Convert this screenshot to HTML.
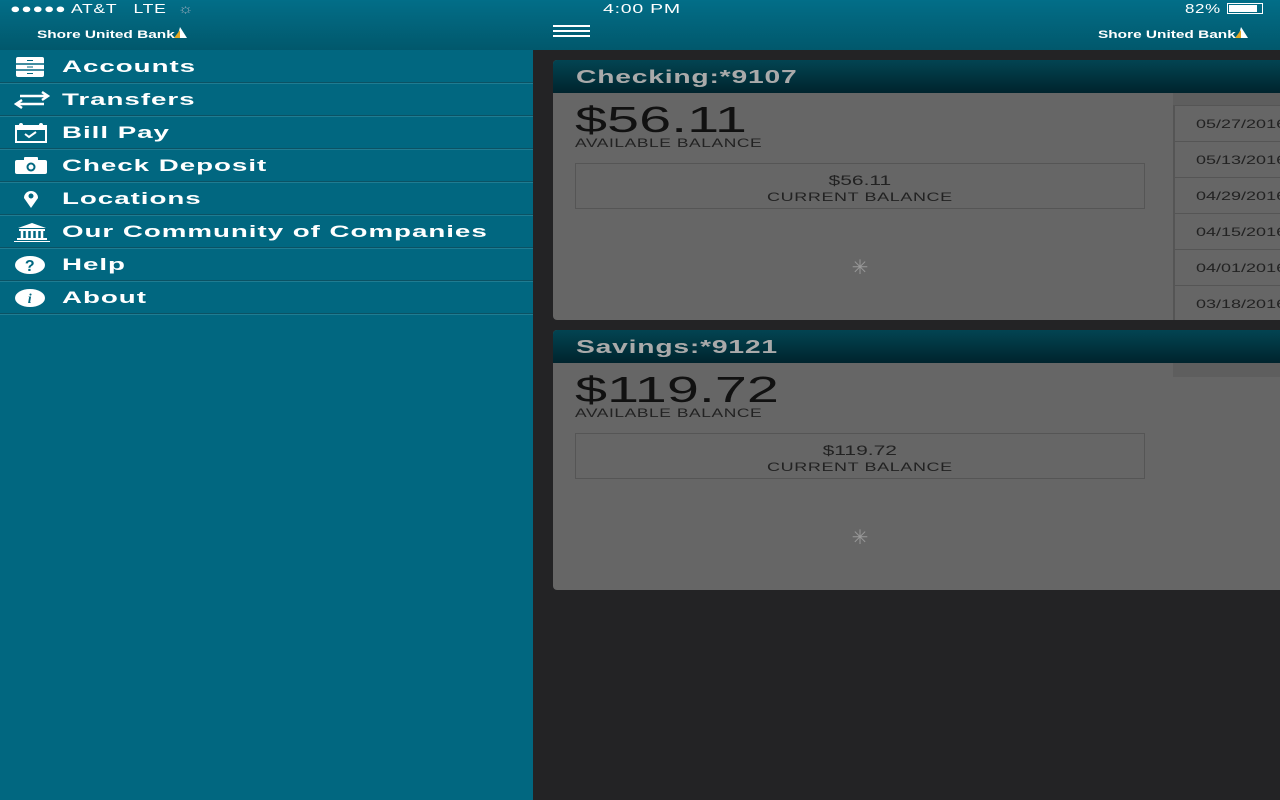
<!DOCTYPE html>
<html><head><style>
*{margin:0;padding:0;box-sizing:border-box}
body{width:1280px;height:800px;overflow:hidden;background:#232325;font-family:"Liberation Sans",sans-serif;position:relative}
.sx{display:inline-block;transform:scaleX(1.5);transform-origin:left center;white-space:nowrap}
.sc{display:inline-block;transform:scaleX(1.5);transform-origin:center;white-space:nowrap}
.top{position:absolute;left:0;top:0;width:1280px;height:50px;background:linear-gradient(#026e88,#01586c)}
.sb{position:absolute;left:0;top:50px;width:533px;height:750px;background:#016780}
.st{position:absolute;top:1px;font-size:13px;color:#fff;letter-spacing:.5px}
.logo{position:absolute;top:27px;font-size:11px;font-weight:bold;color:#fff}
.row{height:33px;border-bottom:1px solid #0b5264;box-shadow:0 1px 0 #1f7c92;position:relative;color:#fff;font-weight:bold;font-size:17px;letter-spacing:.6px;line-height:34px;padding-left:62px}
.row .sx{transform:scaleX(1.63)}
.row svg{position:absolute;left:14px;top:7px}
.card{position:absolute;left:553px;width:727px;background:#666;border-radius:4px 0 0 4px;overflow:hidden}
.ch{height:33px;background:linear-gradient(#024452,#00242d);color:#aaa;font-weight:bold;font-size:18px;letter-spacing:.5px;padding:7px 0 0 23px}
.ch .sx{transform:scaleX(1.57)}
.amt{position:absolute;left:22px;font-size:36px;color:#111;line-height:40px}
.amt .sx{transform:scaleX(1.6)}
.lab{position:absolute;left:22px;font-size:12px;color:#222;letter-spacing:.4px}
.lab .sx{transform:scaleX(1.45)}
.box{position:absolute;left:22px;width:570px;height:46px;border:1px solid #555;text-align:center;color:#222;font-size:14px;padding-top:8px;line-height:16px}
.box small{font-size:12px;letter-spacing:.4px;transform:scaleX(1.5)}
.dates{position:absolute;left:620px;width:107px;border-left:2px solid #555;background:#666}
.dates div{height:36px;border-top:1px solid #555;color:#222;font-size:12px;line-height:36px;padding-left:21px;white-space:nowrap;overflow:hidden}
.dates .sx{transform:scaleX(1.5)}
.spin{position:absolute;left:292px;width:30px;height:30px;font-size:20px;color:#999;text-align:center}
</style></head><body>
<div class="top"></div>
<div class="st" style="left:10px"><span class="sx" style="transform:scaleX(1.35)">●●●●● AT&amp;T &nbsp; LTE &nbsp;<span style="color:#9ab">☼</span></span></div>
<div class="st" style="left:603px"><span class="sx">4:00 PM</span></div>
<div class="st" style="left:1185px"><span class="sx" style="transform:scaleX(1.3)">82%</span> <span style="display:inline-block;width:36px;height:11px;border:1px solid #fff;vertical-align:-1px;padding:1px;margin-left:10px"><span style="display:block;width:28px;height:7px;background:#fff"></span></span></div>
<div class="logo" style="left:37px"><span class="sx" style="transform:scaleX(1.4)">Shore United Bank</span><svg width="14" height="12" viewBox="0 0 14 12" style="vertical-align:-1px;margin-left:38px"><path d="M7 0L14 11H4z" fill="#fff"/><path d="M7 3L7 11H1z" fill="#e5a823"/></svg></div>
<div class="logo" style="left:1098px"><span class="sx" style="transform:scaleX(1.4)">Shore United Bank</span><svg width="14" height="12" viewBox="0 0 14 12" style="vertical-align:-1px;margin-left:38px"><path d="M7 0L14 11H4z" fill="#fff"/><path d="M7 3L7 11H1z" fill="#e5a823"/></svg></div>
<div style="position:absolute;left:553px;top:25px;width:37px;height:2px;background:#fff;box-shadow:0 5px 0 #fff,0 10px 0 #fff"></div>
<div class="sb">
<div class="row"><svg width="32" height="20"><rect x="2" y="0" width="28" height="20" rx="2" fill="#fff"/><path d="M2 7H30M2 13H30" stroke="#016780" stroke-width="1.5"/><path d="M13 3.5H19M13 10H19M13 16.5H19" stroke="#016780"/></svg><span class="sx">Accounts</span></div>
<div class="row"><svg width="36" height="20"><path d="M6 6H34M28 2L34 6L28 10M30 14H2M8 10L2 14L8 18" stroke="#fff" stroke-width="2.5" fill="none"/></svg><span class="sx">Transfers</span></div>
<div class="row"><svg width="34" height="20"><rect x="2" y="3" width="30" height="16" fill="none" stroke="#fff" stroke-width="2"/><rect x="2" y="3" width="30" height="4" fill="#fff"/><path d="M11 11L15 14L22 9" stroke="#fff" stroke-width="2" fill="none"/><circle cx="7" cy="2" r="2" fill="#fff"/><circle cx="27" cy="2" r="2" fill="#fff"/></svg><span class="sx">Bill Pay</span></div>
<div class="row"><svg width="34" height="20"><rect x="1" y="4" width="32" height="14" rx="2" fill="#fff"/><rect x="10" y="1" width="14" height="5" rx="1" fill="#fff"/><circle cx="17" cy="11" r="4.5" fill="#016780"/><circle cx="17" cy="11" r="2.5" fill="#fff"/></svg><span class="sx">Check Deposit</span></div>
<div class="row"><svg width="34" height="20"><path d="M17 19L10 9A7 7 0 1 1 24 9Z" fill="#fff"/><circle cx="17" cy="7" r="2.5" fill="#016780"/></svg><span class="sx">Locations</span></div>
<div class="row"><svg width="36" height="20"><path d="M18 1L32 6H4Z" fill="#fff"/><rect x="5" y="7" width="26" height="2" fill="#fff"/><path d="M8 9V16M13 9V16M18 9V16M23 9V16M28 9V16" stroke="#fff" stroke-width="2.5"/><rect x="3" y="16" width="30" height="2" fill="#fff"/><rect x="0" y="19" width="36" height="1" fill="#fff"/></svg><span class="sx">Our Community of Companies</span></div>
<div class="row"><svg width="34" height="20"><ellipse cx="16" cy="10" rx="15" ry="9" fill="#fff"/><text x="16" y="16" text-anchor="middle" font-size="16" font-weight="bold" fill="#016780" font-family="Liberation Sans">?</text></svg><span class="sx">Help</span></div>
<div class="row"><svg width="34" height="20"><ellipse cx="16" cy="10" rx="15" ry="9" fill="#fff"/><text x="16" y="15" text-anchor="middle" font-size="14" font-weight="bold" font-style="italic" fill="#016780" font-family="Liberation Serif">i</text></svg><span class="sx">About</span></div>
</div>
<div class="card" style="top:60px;height:260px">
<div class="ch"><span class="sx">Checking:*9107</span></div>
<div class="amt" style="top:40px"><span class="sx">$56.11</span></div>
<div class="lab" style="top:76px"><span class="sx">AVAILABLE BALANCE</span></div>
<div class="box" style="top:103px"><span class="sc">$56.11</span><br><small class="sc">CURRENT BALANCE</small></div>
<div class="spin" style="top:195px">✳</div>
<div style="position:absolute;left:620px;top:33px;width:107px;height:12px;background:#5e5e5e"></div>
<div class="dates" style="top:45px"><div><span class="sx">05/27/2016</span></div><div><span class="sx">05/13/2016</span></div><div><span class="sx">04/29/2016</span></div><div><span class="sx">04/15/2016</span></div><div><span class="sx">04/01/2016</span></div><div><span class="sx">03/18/2016</span></div></div>
</div>
<div class="card" style="top:330px;height:260px">
<div class="ch"><span class="sx">Savings:*9121</span></div>
<div class="amt" style="top:40px"><span class="sx">$119.72</span></div>
<div class="lab" style="top:76px"><span class="sx">AVAILABLE BALANCE</span></div>
<div class="box" style="top:103px"><span class="sc">$119.72</span><br><small class="sc">CURRENT BALANCE</small></div>
<div class="spin" style="top:195px">✳</div>
<div style="position:absolute;left:620px;top:33px;width:107px;height:14px;background:#5e5e5e"></div>
</div>
</body></html>
